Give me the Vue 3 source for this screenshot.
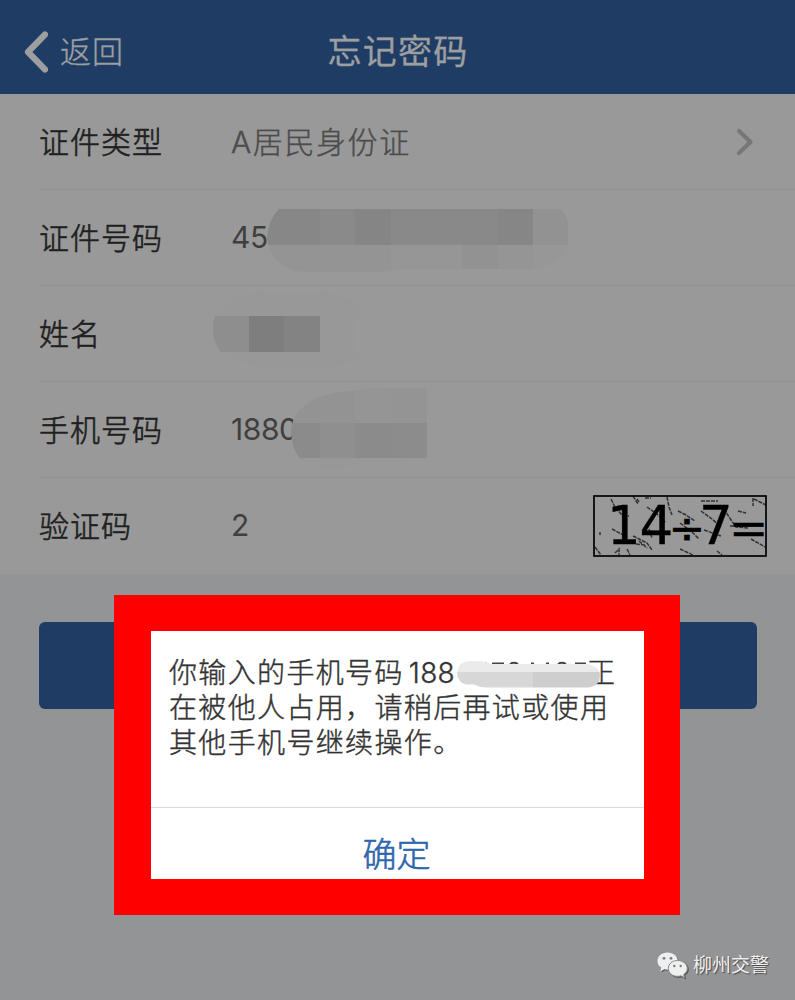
<template>
  <div class="page">
    <header class="nav">
      <button class="back" aria-label="返回">
        <svg class="back-icon" viewBox="0 0 24 42">
          <path d="M21 3.500 L4 21 L21 38.500" />
        </svg>
        <span>返回</span>
      </button>
      <h1 class="title">忘记密码</h1>
    </header>

    <main class="form">
      <div v-for="row in rows" :key="row.label" class="row">
        <span class="label">{{ row.label }}</span>
        <span class="value" :class="{ muted: row.select }">{{ row.value }}</span>
        <svg v-if="row.select" class="arrow" viewBox="0 0 18 28">
          <path d="M3 3 L14.500 14 L3 25" />
        </svg>
        <svg v-if="row.captcha" class="captcha" viewBox="0 0 174 62">
          <g class="noise">
            <path v-for="(d, i) in noise" :key="i" :d="d" />
          </g>
          <text y="48.500"><tspan x="14 46.500">14</tspan><tspan class="sign" x="75.500" y="48">÷</tspan><tspan x="106" y="48.500">7</tspan><tspan class="equals" x="136" y="49">=</tspan></text>
          <rect x="1" y="1" width="172" height="60" />
        </svg>
      </div>

      <!-- Mosaic over private values -->
      <svg class="mosaic" viewBox="0 94 795 480">
        <defs>
          <clipPath id="mask-id">
            <path d="M267 238 Q268 220 279 209 H560 Q568 216 568 225 V245 Q560 267 533 269 H400 Q395 271.500 385 271.500 H300 Q272 268 267 238 Z" />
          </clipPath>
          <clipPath id="mask-name">
            <path d="M215 316 H320 V352 H220 Q209 334 215 316 Z" />
          </clipPath>
          <clipPath id="mask-phone">
            <path d="M291 430 Q293 410 315 399 Q333 391 352 391 Q360 390 370 388 H427 V458 H300 Q291 448 291 430 Z" />
          </clipPath>
        </defs>
        <path class="halo" d="M214 330 Q222 293 265 292 H325 Q350 297 368 315 H355 V352 H366 Q350 366 330 366 H260 Q224 362 214 330 Z" />
        <path class="halo" d="M300 458 H427 Q395 461 370 463 Q340 470 320 468 Z" />
        <g v-for="m in mosaics" :key="m.clip" :clip-path="`url(#${m.clip})`">
          <rect
            v-for="(b, i) in m.blocks"
            :key="i"
            :x="b[0]"
            :y="b[1]"
            :width="b[2]"
            :height="b[3]"
            :fill="b[4]"
          />
        </g>
      </svg>
    </main>

    <button class="submit" aria-label="提交"></button>

    <div class="dialog" role="alertdialog">
      <div class="message">
        <p>你输入的手机号码<span class="num">188</span><svg class="smudge" viewBox="0 0 146 30">
          <path class="tips" d="M27 5.500 H31 M36 5.500 H48 M54 6 Q58 3.500 62 6 M75 5.500 H78 M90 5.500 H93 M102 6 Q106 3.500 110 6 M119 5.500 H130" />
          <path class="smudge-top" d="M1 14 Q3 3 14 3 H24 Q30 4 36 6 H132 Q144 9 144 18 V20 H1 Z" />
          <path class="smudge-bottom" d="M1 14 H77 V29.500 H30 Q24 29.500 18 26.500 H10 Q2 25 1 14 Z" />
          <path class="smudge-dark" d="M77 14 H143.500 Q146 28 132 29.500 H77 Z" />
        </svg>正</p>
        <p>在被他人占用，请稍后再试或使用</p>
        <p>其他手机号继续操作。</p>
      </div>
      <button class="confirm">确定</button>
    </div>

    <div class="account">
      <svg class="wechat" viewBox="0 0 31 27">
        <path class="bubble" d="M10.500 0.500 C4.500 0.500 0.500 4.300 0.500 9 C0.500 12 2 14.300 4.300 15.800 L3.300 19.500 L7.300 17.300 C10 18 12 17.800 13.500 17.300 C18 16 20.800 12.800 20.800 9 C20.800 4.300 16.500 0.500 10.500 0.500 Z" />
        <path class="bubble front" d="M20.500 8.500 C15.200 8.500 11.300 12 11.300 16.500 C11.300 21 15.200 24.300 20.500 24.300 C21.800 24.300 23 24.200 24 23.800 L27.500 25.800 L26.700 22.500 C29 21 30.300 18.900 30.300 16.500 C30.300 12 26 8.500 20.500 8.500 Z" />
        <g class="eyes">
          <circle cx="7" cy="6.300" r="1.400" />
          <circle cx="14" cy="6.300" r="1.400" />
          <circle cx="17.300" cy="14" r="1.200" />
          <circle cx="23.700" cy="14" r="1.200" />
        </g>
      </svg>
      <span>柳州交警</span>
    </div>
  </div>
</template>

<script setup>
const rows = [
  { label: '证件类型', value: 'A居民身份证', select: true },
  { label: '证件号码', value: '45' },
  { label: '姓名', value: '' },
  { label: '手机号码', value: '1880' },
  { label: '验证码', value: '2', captcha: true }
]

// x, y, width, height, color
const mosaics = [
  {
    clip: 'mask-id',
    blocks: [
      [266, 209, 54, 36, '#878787'],
      [320, 209, 35, 36, '#8a8a8a'],
      [355, 209, 36, 36, '#858585'],
      [391, 209, 107, 36, '#898989'],
      [498, 209, 35, 36, '#868686'],
      [533, 209, 36, 36, '#929292'],
      [266, 245, 125, 28, '#949494'],
      [391, 245, 71, 28, '#969696'],
      [462, 245, 36, 28, '#929292'],
      [498, 245, 35, 28, '#959595'],
      [533, 245, 36, 28, '#979797']
    ]
  },
  {
    clip: 'mask-name',
    blocks: [
      [210, 316, 39, 36, '#8e8e8e'],
      [249, 316, 35, 36, '#7e7e7e'],
      [284, 316, 36, 36, '#838383']
    ]
  },
  {
    clip: 'mask-phone',
    blocks: [
      [290, 388, 65, 35, '#939393'],
      [355, 388, 36, 35, '#959595'],
      [391, 388, 36, 35, '#949494'],
      [290, 423, 30, 35, '#8b8b8b'],
      [320, 423, 35, 35, '#8f8f8f'],
      [355, 423, 36, 35, '#8b8b8b'],
      [391, 423, 36, 35, '#8c8c8c']
    ]
  }
]

// Captcha interference lines
const noise = [
  'M18 4 L22 12 L28 19 L36 21',
  'M40 1 L45 9 M44 4 L46 7',
  'M52 3 H58',
  'M74 2 L76 12 L79 20',
  'M54 12 L64 19 L73 28',
  'M85 16 L93 20 L102 26',
  'M108 6 H125',
  'M108 16 L119 24 L128 32',
  'M131 14 L136 22 L143 32 L155 33',
  'M145 16 L153 18',
  'M160 3 V11 M161 4 L169 8 L173 10',
  'M137 31 H153',
  'M87 28 L99 37 L106 44',
  'M56 34 L59 43',
  'M19 34 L34 42',
  'M40 41 L54 48 L59 55',
  'M43 49 L52 50 M46 46 L54 53',
  'M2 52 L8 60',
  'M22 58 L26 54 V60 M34 54 L37 60',
  'M87 54 L100 60',
  'M111 35 L128 41',
  'M158 44 L172 52',
  'M124 56 L129 60',
  'M7 37 V40'
]
</script>

<style>
body {
  margin: 0;
}
</style>

<style scoped>
.page {
  position: relative;
  width: 795px;
  height: 1000px;
  overflow: hidden;
  background: #939496;
  font-family: Inter, "Noto Sans CJK SC", sans-serif;
  font-size: 30px;
}

button {
  padding: 0;
  border: none;
  background: none;
  font-family: inherit;
}

svg {
  display: block;
  fill: none;
}

.nav {
  display: grid;
  grid-template-columns: 1fr auto 1fr;
  align-items: center;
  box-sizing: border-box;
  height: 94px;
  padding: 9px 23px 0 24px;
  background: #1f3c64;
  color: #9d9ea0;
}

.back {
  display: flex;
  align-items: center;
  gap: 12px;
  color: inherit;
  font-size: 31px;
  font-weight: 300;
  letter-spacing: 1px;
  -webkit-text-stroke: 0.4px;
}

.back span {
  margin-top: -4px;
}

.back-icon {
  width: 24px;
  height: 42px;
  stroke: #9d9ea0;
  stroke-width: 6.2;
  stroke-linecap: round;
  stroke-linejoin: round;
}

.title {
  margin: -4px 0 0;
  font-size: 34px;
  font-weight: 400;
  letter-spacing: 1.2px;
  -webkit-text-stroke: 0.3px;
}

.form {
  position: relative;
  background: #999;
}

.row {
  display: flex;
  align-items: center;
  box-sizing: border-box;
  height: 96px;
  margin-left: 39px;
  padding-right: 28px;
  border-bottom: 1px solid #919191;
}

.row:nth-child(5) {
  border-bottom-color: transparent;
}

.label {
  width: 192px;
  padding-bottom: 3px;
  color: #1f1f1f;
  font-weight: 300;
  letter-spacing: 1px;
  -webkit-text-stroke: 0.6px;
}

.value {
  flex: 1;
  padding-bottom: 2px;
  color: #3f3f3f;
  letter-spacing: -0.4px;
}

.muted {
  padding-bottom: 4px;
  color: #4c4c4c;
  font-weight: 300;
  letter-spacing: 1.6px;
  -webkit-text-stroke: 0.4px;
}

.arrow {
  width: 18px;
  height: 28px;
  margin-right: 13px;
  stroke: #777;
  stroke-width: 4.2;
  stroke-linecap: round;
  stroke-linejoin: round;
}

.captcha {
  width: 174px;
  height: 62px;
}

.captcha rect {
  stroke: #000;
  stroke-width: 1.7;
}

.captcha text {
  fill: #000;
  stroke: #000;
  stroke-width: 0.4;
  font-family: "DejaVu Sans", sans-serif;
  font-size: 53px;
}

.captcha .sign {
  font-size: 44px;
}

.captcha .equals {
  font-size: 47px;
}

.noise {
  stroke: #333;
  stroke-width: 1.5;
  stroke-dasharray: 4 1;
}

.mosaic {
  position: absolute;
  top: 0;
  left: 0;
  width: 795px;
  height: 480px;
}

.halo {
  fill: #989898;
}

.submit {
  display: block;
  width: 718px;
  height: 87px;
  margin: 48px 0 0 38.5px;
  border-radius: 6px;
  background: #1f3c64;
}

/* Alert with a red frame */
.dialog {
  position: absolute;
  top: 595px;
  left: 114px;
  display: flex;
  flex-direction: column;
  box-sizing: border-box;
  width: 566px;
  height: 320px;
  border: 36px solid #f00;
  border-left-width: 37px;
  background: #fff;
}

.message {
  flex: none;
  box-sizing: border-box;
  height: 177px;
  padding: 25px 0 0 18px;
  border-bottom: 1px solid #d8dadb;
  color: #333;
  font-size: 28px;
  font-weight: 300;
  line-height: 35px;
  letter-spacing: 1.35px;
  white-space: nowrap;
  -webkit-text-stroke: 0.4px;
}

.message p {
  display: flex;
  align-items: center;
  height: 35px;
  margin: 0;
}

.num {
  margin-left: 5px;
  letter-spacing: 0.3px;
}

.smudge {
  flex: none;
  position: relative;
  z-index: 1;
  width: 146px;
  height: 30px;
  margin: -2px -15px 0 1px;
}

.tips {
  stroke: #444;
  stroke-width: 2;
}

.smudge-top {
  fill: #ebebeb;
}

.smudge-bottom {
  fill: #d7d7d7;
}

.smudge-dark {
  fill: #cecece;
}

.confirm {
  flex: 1;
  padding: 23px 2px 0 0;
  color: #2d67ae;
  font-size: 34px;
  font-weight: 300;
  line-height: 48px;
  -webkit-text-stroke: 0.6px;
}

.account {
  position: absolute;
  right: 26px;
  bottom: 20px;
  display: flex;
  align-items: center;
  gap: 5px;
  color: #f0f0f0;
  font-size: 19px;
  line-height: 28px;
  text-shadow: 1px 1px 1px #444;
}

.account span {
  margin-top: 2px;
}

.wechat {
  width: 31px;
  height: 27px;
  filter: drop-shadow(1px 1px 0.5px #555);
}

.bubble {
  fill: #eef0f0;
}

.front {
  stroke: #858788;
  stroke-width: 1;
}

.eyes {
  fill: #77797a;
}
</style>
